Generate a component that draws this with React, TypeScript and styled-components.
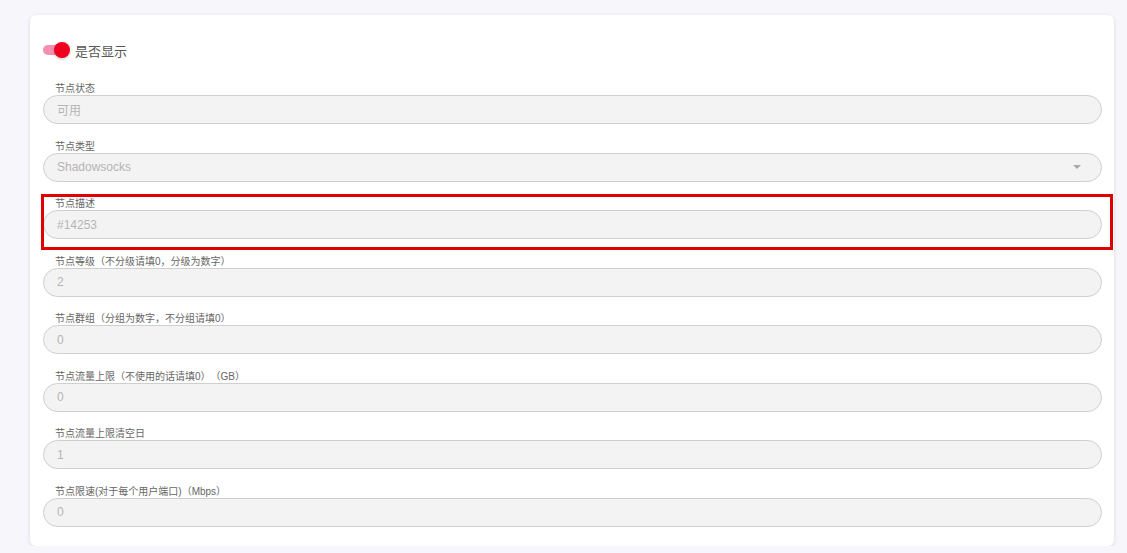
import styled, { createGlobalStyle } from 'styled-components';

const GlobalStyle = createGlobalStyle`
  body {
    margin: 0;
    background: #f7f7fb;
    font-family: "Liberation Sans", "Noto Sans CJK SC", sans-serif;
    text-spacing-trim: space-all;
  }
`;

type TField = {
  label: string;
  value: string;
  select?: boolean;
  highlight?: boolean;
};

const Fields: TField[] = [
  { label: '节点状态', value: '可用' },
  { label: '节点类型', value: 'Shadowsocks', select: true },
  { label: '节点描述', value: '#14253', highlight: true },
  { label: '节点等级（不分级请填0，分级为数字）', value: '2' },
  { label: '节点群组（分组为数字，不分组请填0）', value: '0' },
  { label: '节点流量上限（不使用的话请填0）（GB）', value: '0' },
  { label: '节点流量上限清空日', value: '1' },
  { label: '节点限速(对于每个用户端口)（Mbps）', value: '0' },
];

const App = () => {
  return (
    <>
      <GlobalStyle />
      <Card>
        <SwitchRow>
          <Switch>
            <Knob />
          </Switch>
          <SwitchLabel>是否显示</SwitchLabel>
        </SwitchRow>
        <FieldList>
          {Fields.map((f) => (
            <Field key={f.label} $highlight={f.highlight}>
              <Label>{f.label}</Label>
              <Input>
                <span>{f.value}</span>
                {f.select && <Caret />}
              </Input>
            </Field>
          ))}
        </FieldList>
      </Card>
    </>
  );
};

export default App;

const Card = styled.div`
  margin: 15px 13px 0 30px;
  width: 1084px;
  box-sizing: border-box;
  padding: 23px 12px 19px 13px;
  background: #fff;
  border-radius: 6px;
  box-shadow: 0 1px 4px rgba(0, 0, 0, 0.12);
`;

const SwitchRow = styled.div`
  display: flex;
  align-items: center;
  height: 24px;
  margin-bottom: 19px;
`;

const Switch = styled.div`
  position: relative;
  width: 24px;
  height: 10px;
  border-radius: 5px;
  background: #f48fb1;
  margin-right: 8px;
`;

const Knob = styled.div`
  position: absolute;
  right: -3px;
  top: -3px;
  width: 16px;
  height: 16px;
  border-radius: 50%;
  background: #f0001e;
  box-shadow: 0 1px 3px rgba(0, 0, 0, 0.25);
`;

const SwitchLabel = styled.span`
  font-size: 13px;
  color: #555;
`;

const FieldList = styled.div`
  display: flex;
  flex-direction: column;
  gap: 14.5px;
`;

const Field = styled.div<{ $highlight?: boolean }>`
  position: relative;
  &::after {
    content: '';
    display: ${(p) => (p.$highlight ? 'block' : 'none')};
    position: absolute;
    inset: -2px -11px -11px -2px;
    border: 3px solid #e00000;
    pointer-events: none;
  }
`;

const Label = styled.div`
  height: 14px;
  line-height: 16px;
  padding-left: 12px;
  font-size: 10px;
  color: #666;
`;

const Input = styled.div`
  display: flex;
  align-items: center;
  justify-content: space-between;
  height: 29px;
  box-sizing: border-box;
  padding: 0 20px 0 13px;
  background: #f3f3f3;
  border: 1px solid #cfcfcf;
  border-radius: 15px;
  font-size: 12px;
  color: #b5b5b5;
`;

const Caret = styled.span`
  width: 0;
  height: 0;
  border-left: 4px solid transparent;
  border-right: 4px solid transparent;
  border-top: 4px solid #aaa;
`;
